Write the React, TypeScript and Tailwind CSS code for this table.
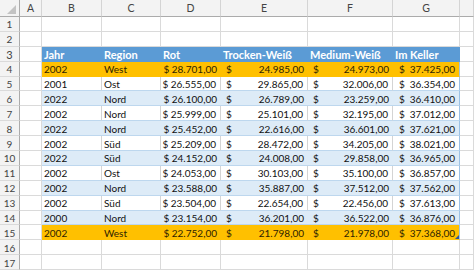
import React from "react";

type Row = {
  y: string;
  r: string;
  d: string;
  e: string;
  f: string;
  g: string;
  hl?: boolean;
};

const rows: Row[] = [
  { y: "2002", r: "West", d: "28.701,00", e: "24.985,00", f: "24.973,00", g: "37.425,00", hl: true },
  { y: "2001", r: "Ost", d: "26.555,00", e: "29.865,00", f: "32.006,00", g: "36.354,00" },
  { y: "2022", r: "Nord", d: "26.100,00", e: "26.789,00", f: "23.259,00", g: "36.410,00" },
  { y: "2002", r: "Nord", d: "25.999,00", e: "25.101,00", f: "32.195,00", g: "37.012,00" },
  { y: "2022", r: "Nord", d: "25.452,00", e: "22.616,00", f: "36.601,00", g: "37.621,00" },
  { y: "2002", r: "Süd", d: "25.209,00", e: "28.472,00", f: "34.205,00", g: "38.021,00" },
  { y: "2022", r: "Süd", d: "24.152,00", e: "24.008,00", f: "29.858,00", g: "36.965,00" },
  { y: "2002", r: "Ost", d: "24.053,00", e: "30.103,00", f: "35.100,00", g: "36.857,00" },
  { y: "2002", r: "Nord", d: "23.588,00", e: "35.887,00", f: "37.512,00", g: "37.562,00" },
  { y: "2002", r: "Süd", d: "23.504,00", e: "22.654,00", f: "22.456,00", g: "37.613,00" },
  { y: "2000", r: "Nord", d: "23.154,00", e: "36.201,00", f: "36.522,00", g: "36.876,00" },
  { y: "2002", r: "West", d: "22.752,00", e: "21.798,00", f: "21.978,00", g: "37.368,00", hl: true },
];

const grid = "grid grid-cols-[20px_22px_60px_59px_60px_87px_85px_67px_1fr]";
const letters = ["A", "B", "C", "D", "E", "F", "G", ""];

function RowNum({ n }: { n: number }) {
  return (
    <div className="flex items-center justify-center bg-[#f3f3f3] border-r border-b border-r-[#ababab] border-b-[#dadada] text-[#444] pt-px">
      {n}
    </div>
  );
}

function EmptyRow({ n }: { n: number }) {
  return (
    <div className={`${grid} h-[14.9px]`}>
      <RowNum n={n} />
      {letters.map((_, i) => (
        <div key={i} className="border-r border-b border-[#dadada]" />
      ))}
    </div>
  );
}

function Acct({ v, bg, line }: { v: string; bg: string; line: string }) {
  return (
    <div className={`flex items-center justify-between pl-[5px] pr-[4px] pt-px ${bg} ${line}`}>
      <span>$</span>
      <span>{v}</span>
    </div>
  );
}

export default function App() {
  return (
    <div className="w-[474px] h-[271px] overflow-hidden bg-white text-[10px] leading-none text-[#111] font-['Lato','Liberation_Sans',sans-serif]">
      {/* column headers */}
      <div className={`${grid} h-[17px]`}>
        <div className="relative bg-[#f3f3f3] border-r border-b border-r-[#ababab] border-b-[#ababab]">
          <svg className="absolute right-[3px] bottom-[2px]" width="9" height="9" viewBox="0 0 10 10">
            <polygon points="10,0 10,10 0,10" fill="#c3c3c3" />
          </svg>
        </div>
        {letters.map((l, i) => (
          <div
            key={i}
            className="flex items-center justify-center bg-[#f3f3f3] border-r border-b border-r-[#d4d4d4] border-b-[#ababab] text-[#444] text-[10.5px] pt-px"
          >
            {l}
          </div>
        ))}
      </div>

      <EmptyRow n={1} />
      <EmptyRow n={2} />

      {/* table header */}
      <div className={`${grid} h-[14.9px] text-[11px]`}>
        <RowNum n={3} />
        <div className="border-r border-b border-[#dadada]" />
        <div className="flex items-center pl-[2px] pt-px bg-[#5b9bd5] text-white font-bold">Jahr</div>
        <div className="flex items-center pl-[2px] pt-px bg-[#5b9bd5] text-white font-bold">Region</div>
        <div className="flex items-center pl-[2px] pt-px bg-[#5b9bd5] text-white font-bold">Rot</div>
        <div className="flex items-center pl-[2px] pt-px bg-[#5b9bd5] text-white font-bold">Trocken-Weiß</div>
        <div className="flex items-center pl-[2px] pt-px bg-[#5b9bd5] text-white font-bold">Medium-Weiß</div>
        <div className="flex items-center pl-[2px] pt-px bg-[#5b9bd5] text-white font-bold">Im Keller</div>
        <div className="border-r border-b border-[#dadada]" />
      </div>

      {rows.map((row, i) => {
        const band = i % 2 === 0;
        const bg = row.hl ? "bg-[#ffc000] text-[#2e2300]" : band ? "bg-[#ddebf7]" : "bg-white";
        const line = row.hl
          ? "border-b border-[#ffc000]"
          : band
            ? "border-b border-[#bdd7ee]"
            : "border-r border-b border-r-[#d4d4d4] border-b-[#bdd7ee]";
        return (
          <div key={i} className={`${grid} h-[14.9px]`}>
            <RowNum n={i + 4} />
            <div className="border-r border-b border-[#dadada]" />
            <div className={`flex items-center pl-[2px] pt-px ${bg} ${line}`}>{row.y}</div>
            <div className={`flex items-center pl-[2px] pt-px ${bg} ${line}`}>{row.r}</div>
            <div className={`flex items-center justify-end pr-[4px] pt-px ${bg} ${line}`}>$ {row.d}</div>
            <Acct v={row.e} bg={bg} line={line} />
            <Acct v={row.f} bg={bg} line={line} />
            <div className={`relative flex items-center justify-between pl-[6px] pr-[4px] pt-px border-r border-r-[#9bc2e6] ${bg} ${row.hl ? "border-b border-b-[#ffc000]" : "border-b border-b-[#bdd7ee]"}`}>
              <span>$</span>
              <span>{row.g}</span>
              {i === rows.length - 1 && (
                <svg className="absolute right-0 bottom-0" width="4" height="4" viewBox="0 0 4 4">
                  <polygon points="4,0 4,4 0,4" fill="#2f5597" />
                </svg>
              )}
            </div>
            <div className="border-r border-b border-[#dadada]" />
          </div>
        );
      })}

      <EmptyRow n={16} />
      <EmptyRow n={17} />
    </div>
  );
}
